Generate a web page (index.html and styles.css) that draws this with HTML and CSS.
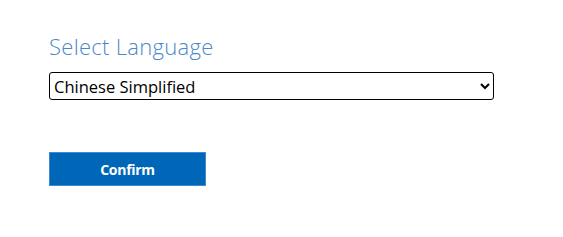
FILE: index.html
```
<!DOCTYPE html>
<html lang="en">
<head>
   <meta charset="UTF-8">
   <meta name="viewport" content="width=device-width, initial-scale=1.0">
   <title>Select Language</title>
   <link rel="stylesheet" href="styles.css">
</head>
<body>
    <div class="block">
        <h2 class="title">Select Language</h2>
        <select class="lang_select" id="language">
            <option value="zh-Hans">Chinese Simplified</option>
            <option value="zh-Hant">Chinese Traditional</option>
            <option value="en">English</option>
        </select>
        <button class="btn" id="confirm">Confirm</button>
    </div>
</body>
</html>
```

FILE: styles.css
```
body {
    margin: 0;
    font-family: "Open Sans", "Noto Sans", sans-serif;
    background: #fff;
}
.block {
    width: 445px;
    padding: 32px 0 0 49px;
    display: flex;
    flex-direction: column;
    align-items: flex-start;
}
.title {
    margin: 0;
    font-size: 22px;
    font-weight: 300;
    color: #4a88c9;
    line-height: 28px;
    letter-spacing: 0.3px;
}
.lang_select {
    margin-top: 12px;
    width: 445px;
    height: 28px;
    border: 1px solid #000;
    border-radius: 3px;
    padding: 0;
    font-family: inherit;
    font-size: 16.5px;
    color: #000;
    background: #fff;
}
.btn {
    margin-top: 52px;
    width: 157px;
    height: 34px;
    border: 1px solid #3d8ad3;
    background-color: #0067b8;
    color: #fff;
    font-family: inherit;
    font-size: 14px;
    font-weight: 700;
    letter-spacing: -0.3px;
    cursor: pointer;
}
```
